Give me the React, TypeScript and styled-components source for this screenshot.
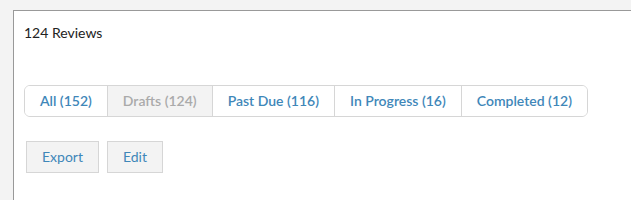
import React from "react";
import styled, { createGlobalStyle } from "styled-components";

const Global = createGlobalStyle`
  html, body { margin: 0; padding: 0; background: #f3f3f3; }
  body { font-family: Lato, "Open Sans", sans-serif; font-size: 14px; color: #222; }
`;

const Panel = styled.div`
  margin: 10px 0 0 13px;
  border-top: 1px solid #999;
  border-left: 1px solid #999;
  background: #fff;
  min-height: 200px;
  padding: 13px 0 0 10px;
  box-sizing: border-box;
`;

const Title = styled.div`
  font-size: 14px;
  line-height: 17px;
  color: #222;
`;

const Tabs = styled.div`
  display: inline-flex;
  margin-top: 44px;
  border: 1px solid #d6d6d6;
  border-radius: 6px;
  overflow: hidden;
  height: 32px;
  box-sizing: border-box;
`;

const Tab = styled.button<{ $disabled?: boolean }>`
  font-family: Lato, "Open Sans", sans-serif;
  font-size: 14px;
  font-weight: 600;
  border: 0;
  border-left: 1px solid #d6d6d6;
  &:first-child { border-left: 0; }
  padding: 0 15px 2px;
  background: ${(p) => (p.$disabled ? "#f3f3f3" : "#fff")};
  color: ${(p) => (p.$disabled ? "#aaa" : "#3f87b9")};
  cursor: pointer;
  display: flex;
  align-items: center;
`;

const Actions = styled.div`
  display: flex;
  gap: 8px;
  margin: 24px 0 0 2px;
`;

const Button = styled.button`
  font-family: Lato, "Open Sans", sans-serif;
  font-size: 14px;
  height: 32px;
  box-sizing: border-box;
  padding: 0 15px 2px;
  background: #f3f3f3;
  border: 1px solid #d6d6d6;
  color: #3f87b9;
  border-radius: 0;
`;

const tabs = [
  { label: "All (152)" },
  { label: "Drafts (124)", disabled: true },
  { label: "Past Due (116)" },
  { label: "In Progress (16)" },
  { label: "Completed (12)" },
];

export default function App() {
  return (
    <>
      <Global />
      <Panel>
        <Title>124 Reviews</Title>
        <Tabs>
          {tabs.map((t) => (
            <Tab key={t.label} $disabled={t.disabled}>
              {t.label}
            </Tab>
          ))}
        </Tabs>
        <Actions>
          <Button>Export</Button>
          <Button>Edit</Button>
        </Actions>
      </Panel>
    </>
  );
}
